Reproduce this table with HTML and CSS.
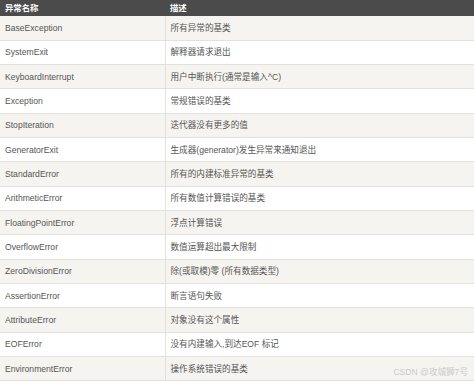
FILE: index.html
```html
<!DOCTYPE html>
<html lang="zh">
<head>
<meta charset="utf-8">
<link rel="stylesheet" href="styles.css">
</head>
<body>
<div class="wrap">
<table class="tbl">
<thead>
<tr><th class="c1">异常名称</th><th>描述</th></tr>
</thead>
<tbody>
<tr><td class="c1">BaseException</td><td>所有异常的基类</td></tr>
<tr><td class="c1">SystemExit</td><td>解释器请求退出</td></tr>
<tr><td class="c1">KeyboardInterrupt</td><td>用户中断执行(通常是输入^C)</td></tr>
<tr><td class="c1">Exception</td><td>常规错误的基类</td></tr>
<tr><td class="c1">StopIteration</td><td>迭代器没有更多的值</td></tr>
<tr><td class="c1">GeneratorExit</td><td>生成器(generator)发生异常来通知退出</td></tr>
<tr><td class="c1">StandardError</td><td>所有的内建标准异常的基类</td></tr>
<tr><td class="c1">ArithmeticError</td><td>所有数值计算错误的基类</td></tr>
<tr><td class="c1">FloatingPointError</td><td>浮点计算错误</td></tr>
<tr><td class="c1">OverflowError</td><td>数值运算超出最大限制</td></tr>
<tr><td class="c1">ZeroDivisionError</td><td>除(或取模)零 (所有数据类型)</td></tr>
<tr><td class="c1">AssertionError</td><td>断言语句失败</td></tr>
<tr><td class="c1">AttributeError</td><td>对象没有这个属性</td></tr>
<tr><td class="c1">EOFError</td><td>没有内建输入,到达EOF 标记</td></tr>
<tr><td class="c1">EnvironmentError</td><td>操作系统错误的基类</td></tr>
</tbody>
</table>
<div class="mark">CSDN @攻城狮7号</div>
</div>
</body>
</html>
```
FILE: styles.css
```css
html, body {
  margin: 0;
  padding: 0;
  background: #ffffff;
}
body {
  font-family: "Liberation Sans", Arial, "Noto Sans CJK SC", sans-serif;
  font-size: 8.6px;
  color: #555555;
}
.wrap {
  position: relative;
  width: 474px;
  height: 381px;
  overflow: hidden;
}
.tbl {
  width: 474px;
  border-collapse: collapse;
  table-layout: fixed;
}
.tbl th {
  background: #4b4b4b;
  color: #ffffff;
  font-weight: bold;
  text-align: left;
  height: 16px;
  padding: 0 5px;
  font-size: 8.4px;
  line-height: 16px;
}
.tbl .c1 {
  width: 155px;
}
.tbl td {
  height: 24.33px;
  padding: 0 5px;
  border-bottom: 1px solid #e4e1dc;
  line-height: 12px;
  box-sizing: border-box;
  white-space: nowrap;
}
.tbl td.c1 {
  border-right: 1px solid #e4e1dc;
}
.tbl tbody tr:nth-child(odd) td {
  background: #f6f4f0;
}
.mark {
  position: absolute;
  right: 6px;
  bottom: 4px;
  color: #c9c9c9;
  font-size: 8.6px;
}
```
